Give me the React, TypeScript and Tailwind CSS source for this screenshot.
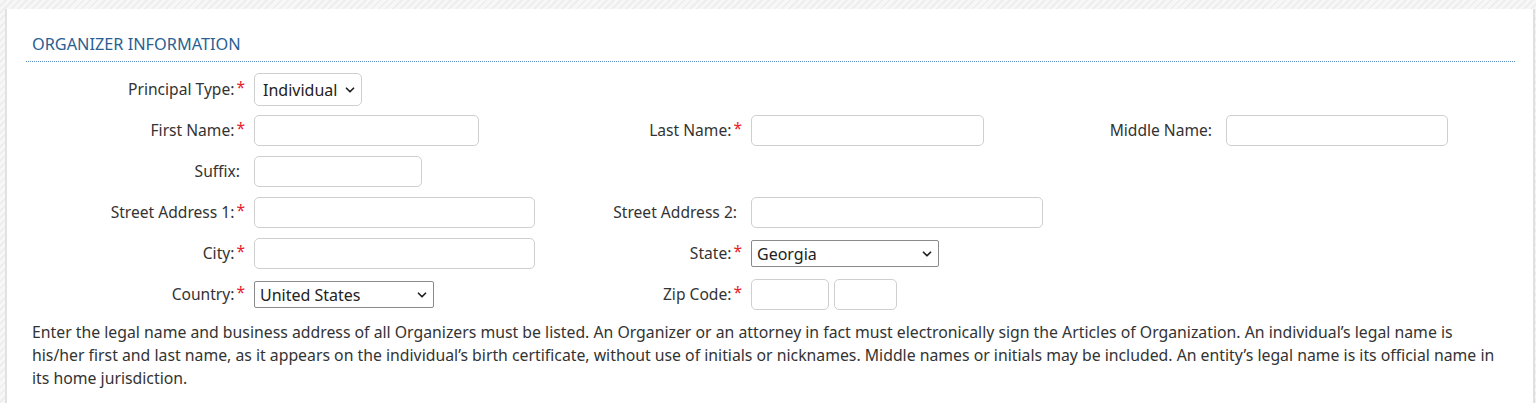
import { ChevronDown } from "lucide-react";

const font = { fontFamily: '"Noto Sans", "Open Sans", Arial, sans-serif' };

function Label({ text, required }: { text: string; required?: boolean }) {
  return (
    <div className="flex justify-end items-center pr-[3px] text-[15.6px] text-[#333]">
      <span>{text}</span>
      {required ? <span className="text-[#e8202a] ml-[2px] -mt-[3px]">*</span> : <span className="w-[5px]" />}
    </div>
  );
}

function TextBox({ w }: { w: string }) {
  return (
    <input
      type="text"
      className={`${w} h-[31px] rounded-[5px] border border-[#cfcfcf] bg-white px-2 text-[16px] outline-none`}
    />
  );
}

function Select({
  value,
  w,
  rounded,
}: {
  value: string;
  w: string;
  rounded?: boolean;
}) {
  return (
    <div className={`relative ${w}`}>
      <select
        defaultValue={value}
        className={
          rounded
            ? "w-full h-[33px] appearance-none rounded-[5px] border border-[#cfcfcf] bg-white pl-2 pr-6 text-[16px] text-[#222] outline-none"
            : "w-full h-[27px] appearance-none rounded-[2px] border border-[#8a8a8a] bg-white pl-[5px] pr-6 text-[16px] text-[#222] outline-none"
        }
      >
        <option>{value}</option>
      </select>
      <ChevronDown
        className="pointer-events-none absolute right-[5px] top-1/2 -translate-y-1/2 w-[14px] h-[14px] text-[#222]"
        strokeWidth={3}
      />
    </div>
  );
}

export default function App() {
  return (
    <div
      className="w-[1536px] h-[403px] overflow-hidden bg-[repeating-linear-gradient(135deg,#f7f7f7_0px,#f7f7f7_3px,#eeeeee_3px,#eeeeee_5px)] pl-[5px] pt-[9px] pr-[1px]"
      style={font}
    >
      <div className="h-full border-l-2 border-l-[#e2e2e2] border-r-2 border-r-[#e0e0e0] bg-white">
        <div className="pl-[19px] pr-[18px] pt-[25px]">
          <div className="border-b border-dotted border-b-[#5b8fc4] pb-[6px] pl-[6px] text-[16.3px] leading-[21px] text-[#2b5f93]">
            ORGANIZER INFORMATION
          </div>

          <div className="mt-[7px] grid grid-cols-[222px_290px_195px_300px_163px_1fr] auto-rows-[41px] items-center gap-x-[6px]">
            <Label text="Principal Type:" required />
            <div className="col-span-5">
              <Select value="Individual" w="w-[108px]" rounded />
            </div>

            <Label text="First Name:" required />
            <TextBox w="w-[225px]" />
            <Label text="Last Name:" required />
            <TextBox w="w-[233px]" />
            <Label text="Middle Name:" />
            <TextBox w="w-[222px]" />

            <Label text="Suffix:" />
            <div className="col-span-5">
              <TextBox w="w-[168px]" />
            </div>

            <Label text="Street Address 1:" required />
            <TextBox w="w-[281px]" />
            <Label text="Street Address 2:" />
            <div className="col-span-3">
              <TextBox w="w-[292px]" />
            </div>

            <Label text="City:" required />
            <TextBox w="w-[281px]" />
            <Label text="State:" required />
            <div className="col-span-3">
              <Select value="Georgia" w="w-[188px]" />
            </div>

            <Label text="Country:" required />
            <Select value="United States" w="w-[180px]" />
            <Label text="Zip Code:" required />
            <div className="col-span-3 flex gap-[5px]">
              <TextBox w="w-[78px]" />
              <TextBox w="w-[63px]" />
            </div>
          </div>

          <p className="mt-[6px] pl-[6px] w-[1478px] text-[15.8px] leading-[23px] text-[#333]">
            Enter the legal name and business address of all Organizers must be listed. An Organizer or an attorney in fact must electronically sign the Articles of Organization. An individual’s legal name is his/her first and last name, as it appears on the individual’s birth certificate, without use of initials or nicknames. Middle names or initials may be included. An entity’s legal name is its official name in its home jurisdiction.
          </p>
        </div>
      </div>
    </div>
  );
}
